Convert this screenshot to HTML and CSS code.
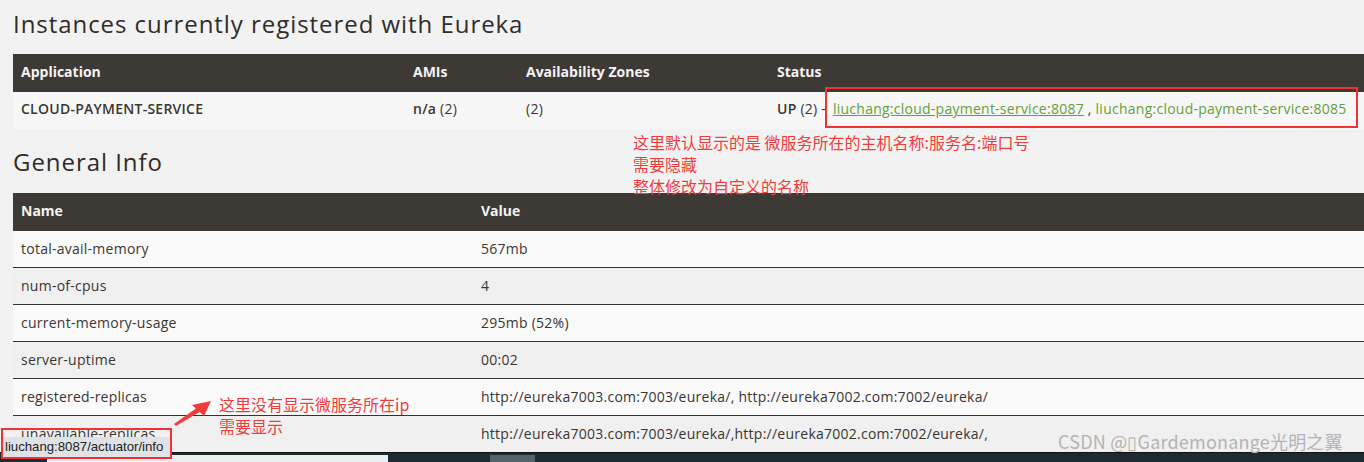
FILE: index.html
```html
<!DOCTYPE html>
<html lang="zh">
<head>
<meta charset="utf-8">
<title>Eureka</title>
<link rel="stylesheet" href="styles.css">
</head>
<body>
<div class="page">
  <h2 class="title first">Instances currently registered with Eureka</h2>
  <table class="grid apps">
    <thead>
      <tr><th class="c-app">Application</th><th class="c-ami">AMIs</th><th class="c-az">Availability Zones</th><th class="c-status">Status</th></tr>
    </thead>
    <tbody>
      <tr class="single"><td><b>CLOUD-PAYMENT-SERVICE</b></td><td><b>n/a</b> (2)</td><td>(2)</td><td><b>UP</b> (2) - <a class="lnk hover">liuchang:cloud-payment-service:8087</a> , <a class="lnk">liuchang:cloud-payment-service:8085</a></td></tr>
    </tbody>
  </table>

  <h2 class="title second">General Info</h2>
  <table class="grid info">
    <thead>
      <tr><th class="c-name">Name</th><th>Value</th></tr>
    </thead>
    <tbody>
      <tr><td>total-avail-memory</td><td>567mb</td></tr>
      <tr><td>num-of-cpus</td><td>4</td></tr>
      <tr><td>current-memory-usage</td><td>295mb (52%)</td></tr>
      <tr><td>server-uptime</td><td>00:02</td></tr>
      <tr><td>registered-replicas</td><td>http://eureka7003.com:7003/eureka/, http://eureka7002.com:7002/eureka/</td></tr>
      <tr><td>unavailable-replicas</td><td>http://eureka7003.com:7003/eureka/,http://eureka7002.com:7002/eureka/,</td></tr>
    </tbody>
  </table>
</div>
<div class="taskbar">
  <div class="tb-light"></div>
  <div class="tb-gray"></div>
</div>

<div class="mark box-status"></div>
<div class="note note-top">这里默认显示的是 微服务所在的主机名称:服务名:端口号<br>需要隐藏<br>整体修改为自定义的名称</div>
<svg class="arrow" width="45" height="32" viewBox="0 0 45 32">
  <polygon points="4,29 6,31 31,16 28,12" fill="#f23c3c"/>
  <polygon points="41,6 22,10 34,21" fill="#f23c3c"/>
</svg>
<div class="note note-bottom">这里没有显示微服务所在ip<br>需要显示</div>
<div class="tooltip">liuchang:8087/actuator/info</div>
<div class="mark box-tip"></div>
<div class="watermark">CSDN @▯Gardemonange光明之翼</div>
</body>
</html>
```
FILE: styles.css
```css
html, body {
  margin: 0;
  padding: 0;
  background: #f2f2f2;
  overflow: hidden;
}
body {
  width: 1364px;
  height: 462px;
  position: relative;
  font-family: "Open Sans", "Noto Sans", sans-serif;
  color: #3a3632;
}
.page {
  padding-left: 13px;
}
.title {
  font-family: "Open Sans", "Noto Sans", sans-serif;
  font-weight: 500;
  font-size: 24px;
  line-height: 30px;
  color: #2f2c29;
  margin: 0;
  letter-spacing: 0.95px;
}
.title.first { padding-top: 9px; padding-bottom: 15px; }
.title.second { padding-top: 18px; padding-bottom: 16px; }

.grid {
  width: 100%;
  border-collapse: collapse;
  font-size: 14px;
}
.grid th {
  background: #3d3935;
  color: #f4f4f4;
  font-weight: 700;
  text-align: left;
  height: 38px;
  padding: 0 8px 4px;
  box-sizing: border-box;
}
.grid td {
  padding: 0 8px;
  height: 36px;
  box-sizing: border-box;
  letter-spacing: 0.25px;
}
.grid b { font-weight: 600; }
.apps .single td { height: 37px; background: #f7f7f7; padding-bottom: 4px; }
.c-app { width: 392px; }
.c-ami { width: 113px; }
.c-az { width: 251px; }
.c-name { width: 460px; }

.info tbody tr:nth-child(odd) td { background: #fafafa; }
.info tbody tr:nth-child(even) td { background: #f0f0f0; }
.info tbody tr + tr td { border-top: 1px solid #333; height: 37px; }

.lnk { color: #66a03a; text-decoration: none; }
.lnk.hover { text-decoration: underline; }
.lnk:first-of-type { margin-left: 3px; }

.taskbar {
  margin-top: 0;
  height: 10px;
  border-top: 1px solid #111;
  background: #1e2b31;
  position: relative;
  display: flex;
  padding-top: 2px;
}
.tb-light { margin-left: 47px; width: 341px; background: #eceff1; }
.tb-gray { margin-left: 102px; width: 45px; background: #56646a; }

.mark {
  position: absolute;
  border: 2px solid #f23232;
  box-sizing: border-box;
}
.box-status { left: 825px; top: 87px; width: 533px; height: 41px; }
.box-tip { left: 1px; top: 428px; width: 171px; height: 31px; }

.note {
  position: absolute;
  font-family: "Noto Sans CJK SC", sans-serif;
  font-size: 16px;
  line-height: 22px;
  color: #f23c3c;
}
.note-top { left: 633px; top: 131px; }
.note-bottom { left: 219px; top: 393px; }
.arrow { position: absolute; left: 170px; top: 395px; }

.tooltip {
  position: absolute;
  left: 2px;
  top: 437px;
  width: 168px;
  height: 20px;
  background: #dfe2e6;
  font-family: "Liberation Sans", sans-serif;
  font-size: 13.2px;
  line-height: 20px;
  color: #222;
  padding-left: 3px;
  box-sizing: border-box;
  white-space: nowrap;
  overflow: hidden;
}
.watermark {
  position: absolute;
  left: 1058px;
  top: 429px;
  font-family: "Noto Sans CJK SC", sans-serif;
  font-size: 18px;
  line-height: 24px;
  color: #b4b4b4;
  letter-spacing: 0.2px;
}
```
